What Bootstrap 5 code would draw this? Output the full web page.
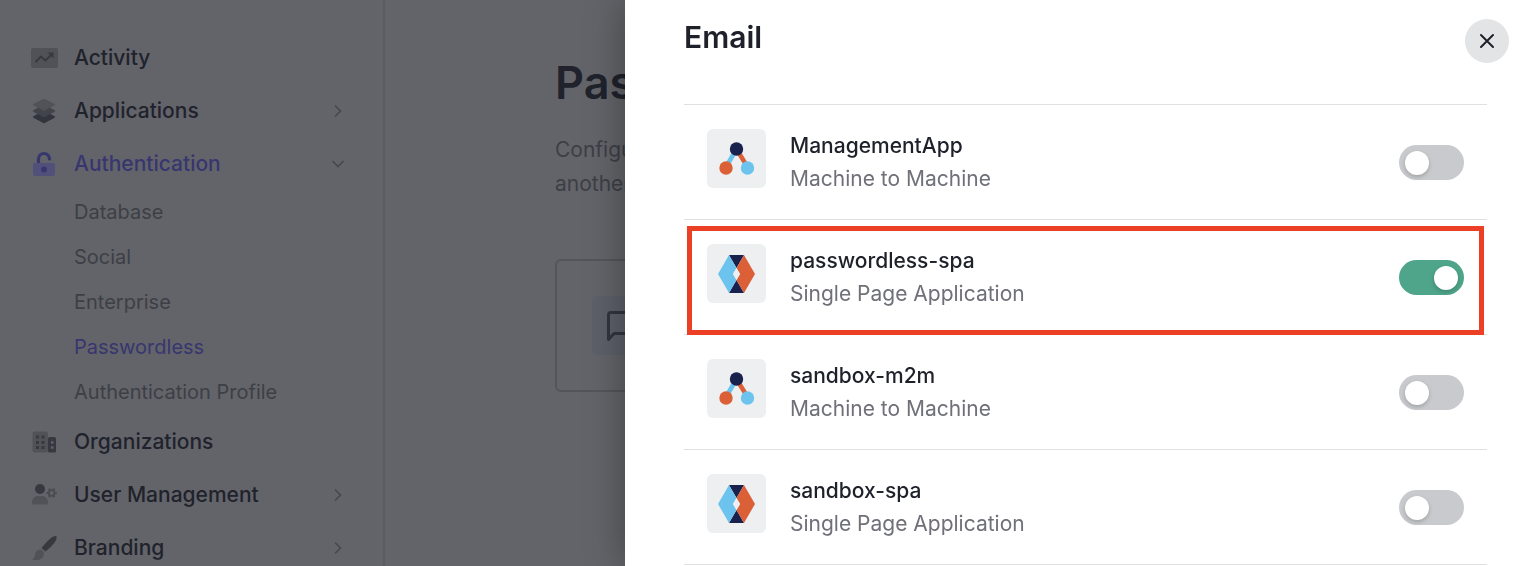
<!DOCTYPE html>
<html lang="en">
<head>
<meta charset="utf-8">
<meta name="viewport" content="width=device-width, initial-scale=1">
<title>Passwordless - Email</title>
<link rel="stylesheet" href="https://cdn.jsdelivr.net/npm/bootstrap@5.3.0/dist/css/bootstrap.min.css">
<style>
  body { font-family: Inter, "Liberation Sans", sans-serif; background: #636469; color: #20222c; height: 100vh; overflow: hidden; }
  a { text-decoration: none; }
  .side-menu { width: 385px; padding: 31px 37px 0 30px; border-right: 2px solid #5b5c61; }
  .menu-link { height: 53px; gap: 16px; color: #20222c; font-size: 21px; font-weight: 500; }
  .menu-link .menu-icon { width: 28px; height: 28px; flex: none; }
  .menu-link .chevron { width: 16px; height: 16px; flex: none; fill: none; stroke: #46484e; stroke-width: 1.6; }
  .sub-link { height: 45px; padding: 0 0 2px 44px; color: #3d3f46; font-size: 20px; }
  .menu-link.is-active, .sub-link.is-active { color: #37366f; }
  .page-main { padding: 55px 60px 0 170px; min-width: 0; }
  .page-title { font-size: 45px; line-height: 56px; font-weight: 600; margin-bottom: 22px; }
  .page-text { font-size: 21px; line-height: 34px; color: #3d3f46; margin-bottom: 58px; }
  .method-card { border: 2px solid #54555a; border-radius: 6px; padding: 35px; }
  .method-icon { width: 59px; height: 59px; border-radius: 6px; background: #5d6069; }
  .drawer.offcanvas { --bs-offcanvas-width: 911px; max-width: 100%; color: #1e212a; border: 0; box-shadow: 0 0 36px rgba(0,0,0,.35); transition: none; }
  .drawer-head { padding: 19px 27px 0 59px; margin-bottom: 41px; }
  .drawer-title { font-size: 30px; line-height: 36px; font-weight: 600; }
  .close-round { width: 44px; height: 44px; background: #e3e4e6; }
  .close-round:hover { background: #d8d9dc; }
  .app-list { margin: 0 49px 0 59px; border-bottom: 1px solid #dfe0e2; }
  .app-item { padding: 24px 23px; gap: 24px; border-top: 1px solid #dfe0e2; }
  .app-icon { width: 59px; height: 59px; border-radius: 6px; background: #eeeff1; flex: none; }
  .app-label { line-height: 33px; font-size: 21px; }
  .app-name { font-weight: 500; }
  .app-kind { color: #6f7078; }
  .toggle.form-check-input { width: 65px; height: 35px; margin: 0; border: 0; border-radius: 18px; background: #c9cacd; padding: 6px; flex: none; cursor: pointer; }
  .toggle::before { content: ""; display: block; width: 24px; height: 24px; border-radius: 50%; background: #fff; box-shadow: 0 2px 4px rgba(0,0,0,.2); }
  .toggle:checked { background: #4ea589; }
  .toggle:checked::before { margin-left: auto; }
  .highlight-box { position: absolute; inset: 6px 3px -1px 3px; border: 5px solid #eb4026; pointer-events: none; }
</style>
</head>
<body>
<svg class="d-none" aria-hidden="true">
  <symbol id="right" viewBox="0 0 16 16"><path d="M5 2.500 10.500 8 5 13.500"/></symbol>
  <symbol id="down" viewBox="0 0 16 16"><path d="M2.500 5 8 10.500 13.500 5"/></symbol>
  <symbol id="m2m" viewBox="0 0 59 59">
    <path d="M29.500 20 19 38" stroke="#6cc4ee" stroke-width="4.500"/>
    <path d="M29.500 20 40.500 38" stroke="#dc6037" stroke-width="4.500"/>
    <circle cx="29.500" cy="20" r="6.700" fill="#19214d"/>
    <circle cx="19" cy="39" r="6.700" fill="#dc6037"/>
    <circle cx="40.500" cy="39" r="6.700" fill="#6cc4ee"/>
  </symbol>
  <symbol id="spa" viewBox="0 0 59 59">
    <path d="M22 11h15l-7.500 13zM22 49h15l-7.500-13z" fill="#19214d"/>
    <path d="M22 11 11 30l11 19 7.500-13-3.500-6 3.500-6z" fill="#6cc4ee"/>
    <path d="M37 11l11 19-11 19-7.500-13 3.500-6-3.500-6z" fill="#dc6037"/>
    <path d="M29.500 24l3.500 6-3.500 6-3.500-6z" fill="#eeeff1"/>
  </symbol>
</svg>

<div class="d-flex h-100">
  <nav class="side-menu flex-shrink-0" aria-label="Main">
    <a href="#" class="menu-link d-flex align-items-center">
      <svg class="menu-icon" viewBox="0 0 28 28"><rect x="1" y="4" width="27" height="20" rx="2" fill="#505257"/><path d="M5.500 18l5.500-5.500 4.500 4L22 10" fill="none" stroke="#363940" stroke-width="1.900"/><path d="M17.500 8.500H23.500V14.500z" fill="#363940"/></svg>
      <span>Activity</span></a>
    <a href="#" class="menu-link d-flex align-items-center">
      <svg class="menu-icon" viewBox="0 0 28 28" stroke-linejoin="round" stroke-width="1.500"><path d="M14 14.500l10.300 5.500L14 25.700 3.700 20z" fill="#32353d" stroke="#32353d"/><path d="M14 8.500l10.300 5.500L14 19.500 3.700 14z" fill="#41444b" stroke="#41444b"/><path d="M14 2.500l10.300 5.200L14 13.200 3.700 7.700z" fill="#515358" stroke="#515358"/></svg>
      <span class="flex-grow-1">Applications</span><svg class="chevron"><use href="#right"/></svg></a>
    <a href="#" class="menu-link is-active d-flex align-items-center">
      <svg class="menu-icon" viewBox="0 0 28 28"><rect x="3" y="13" width="22" height="13" rx="2" fill="#51507a"/><path d="M8.500 13V9a5.500 5.500 0 0 1 11 0" fill="none" stroke="#37366f" stroke-width="3.200"/><circle cx="19.500" cy="9" r="1.600" fill="#37366f"/><circle cx="14" cy="19.500" r="3" fill="#37366f"/></svg>
      <span class="flex-grow-1">Authentication</span><svg class="chevron"><use href="#down"/></svg></a>
    <a href="#" class="sub-link d-flex align-items-center">Database</a>
    <a href="#" class="sub-link d-flex align-items-center">Social</a>
    <a href="#" class="sub-link d-flex align-items-center">Enterprise</a>
    <a href="#" class="sub-link is-active d-flex align-items-center" aria-current="page">Passwordless</a>
    <a href="#" class="sub-link d-flex align-items-center">Authentication Profile</a>
    <a href="#" class="menu-link d-flex align-items-center">
      <svg class="menu-icon" viewBox="0 0 28 28"><rect x="2.500" y="3.500" width="15.500" height="21" rx="2" fill="#505257"/><rect x="18" y="9" width="8" height="15.500" rx="1.500" fill="#363940"/><path d="M6 9h3M11.500 9h3M6 14.500h3M11.500 14.500h3M6 19.500h3M11.500 19.500h3" stroke="#363940" stroke-width="2.800"/><path d="M21 14.500h2.500M21 19.500h2.500" stroke="#606267" stroke-width="2.400"/></svg>
      <span>Organizations</span></a>
    <a href="#" class="menu-link d-flex align-items-center">
      <svg class="menu-icon" viewBox="0 0 28 28"><circle cx="10" cy="8" r="5" fill="#363940"/><path d="M2 22c0-5 2.500-7 6-7h4c3.500 0 6 2 6 7q0 1.500-1.500 1.500h-13Q2 23.500 2 22z" fill="#505257"/><circle cx="21.700" cy="12" r="2.900" fill="none" stroke="#484b51" stroke-width="1.900"/><path d="M25.400 12h1.400M23.600 15.200l.7 1.200M19.800 15.200l-.7 1.200M18 12h-1.400M19.800 8.800l-.7-1.200M23.600 8.800l.7-1.200" stroke="#484b51" stroke-width="2.200"/></svg>
      <span class="flex-grow-1">User Management</span><svg class="chevron"><use href="#right"/></svg></a>
    <a href="#" class="menu-link d-flex align-items-center">
      <svg class="menu-icon" viewBox="0 0 28 28"><path d="M26.500 2q.8 2.500-1.500 6-4 5.500-9.500 9.500L11.500 14Q18 6 22 3.300 25 1.500 26.500 2z" fill="#363940"/><path d="M2 25.700c3-2 2.500-3.500 3.500-7 1.500-3.500 5-4 7-2.200 2.200 2 2 5.500-.5 7.700-2.500 2-6.500 2-10 1.500z" fill="#505257"/></svg>
      <span class="flex-grow-1">Branding</span><svg class="chevron"><use href="#right"/></svg></a>
  </nav>

  <main class="page-main flex-grow-1">
    <h1 class="page-title">Passwordless</h1>
    <p class="page-text">Configure<br>another</p>
    <div class="method-card">
      <div class="method-icon d-flex align-items-center justify-content-center">
        <svg width="32" height="32" viewBox="0 0 32 32" fill="none" stroke="#32353d" stroke-width="3" stroke-linejoin="round"><path d="M2.500 29.500V5q0-2.500 2.500-2.500h22q2.500 0 2.500 2.500v16q0 2.500-2.500 2.500H8z"/></svg>
      </div>
    </div>
  </main>
</div>

<aside class="drawer offcanvas offcanvas-end show" data-bs-backdrop="false" tabindex="-1" role="dialog" aria-labelledby="drawerTitle">
  <header class="drawer-head d-flex justify-content-between align-items-start">
    <h2 class="drawer-title mb-0" id="drawerTitle">Email</h2>
    <button type="button" class="close-round btn border-0 rounded-circle p-0 d-flex align-items-center justify-content-center" data-bs-dismiss="offcanvas" aria-label="Close">
      <svg width="16" height="16" viewBox="0 0 16 16" stroke="#1e212a" stroke-width="2" stroke-linecap="round"><path d="M2 2l12 12M14 2 2 14"/></svg>
    </button>
  </header>
  <ul class="app-list list-unstyled">
    <li class="app-item d-flex align-items-center">
      <svg class="app-icon align-self-start"><use href="#m2m"/></svg>
      <label class="app-label flex-grow-1" for="app1"><span class="app-name d-block">ManagementApp</span><span class="app-kind d-block">Machine to Machine</span></label>
      <input class="toggle form-check-input" type="checkbox" role="switch" id="app1">
    </li>
    <li class="app-item d-flex align-items-center position-relative">
      <svg class="app-icon align-self-start"><use href="#spa"/></svg>
      <label class="app-label flex-grow-1" for="app2"><span class="app-name d-block">passwordless-spa</span><span class="app-kind d-block">Single Page Application</span></label>
      <input class="toggle form-check-input" type="checkbox" role="switch" id="app2" checked>
      <div class="highlight-box"></div>
    </li>
    <li class="app-item d-flex align-items-center">
      <svg class="app-icon align-self-start"><use href="#m2m"/></svg>
      <label class="app-label flex-grow-1" for="app3"><span class="app-name d-block">sandbox-m2m</span><span class="app-kind d-block">Machine to Machine</span></label>
      <input class="toggle form-check-input" type="checkbox" role="switch" id="app3">
    </li>
    <li class="app-item d-flex align-items-center">
      <svg class="app-icon align-self-start"><use href="#spa"/></svg>
      <label class="app-label flex-grow-1" for="app4"><span class="app-name d-block">sandbox-spa</span><span class="app-kind d-block">Single Page Application</span></label>
      <input class="toggle form-check-input" type="checkbox" role="switch" id="app4">
    </li>
  </ul>
</aside>
<script src="https://cdn.jsdelivr.net/npm/bootstrap@5.3.0/dist/js/bootstrap.bundle.min.js"></script>
</body>
</html>
